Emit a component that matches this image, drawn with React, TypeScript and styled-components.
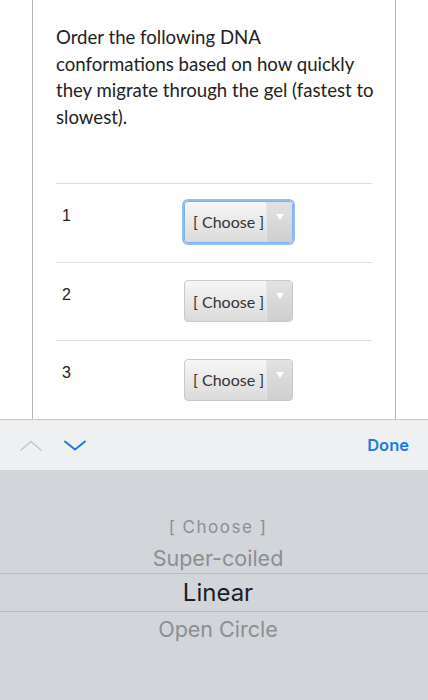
import styled, { createGlobalStyle } from 'styled-components'

const Global = createGlobalStyle`
  html, body { margin: 0; padding: 0; background: #fff; }
  body { font-family: Lato, "Noto Sans", sans-serif; -webkit-font-smoothing: antialiased; }
  #root { height: 700px; }
`

const rows = [1, 2, 3]
const options = ['[ Choose ]', 'Super-coiled', 'Linear', 'Open Circle']

export default function App() {
  return (
    <Page>
      <Global />
      <Viewport>
        <Card>
          <Question>
            Order the following DNA conformations based on how quickly they migrate through the gel (fastest to slowest).
          </Question>
          {rows.map(n => (
            <Row key={n}>
              <Label>{n}</Label>
              <Select $focused={n === 1}>
                <SelectText>[ Choose ]</SelectText>
                <Arrow>
                  <svg width="8" height="6" viewBox="0 0 8 6"><path d="M0 0 H8 L4 6 Z" fill="#fff" /></svg>
                </Arrow>
              </Select>
            </Row>
          ))}
        </Card>
      </Viewport>

      <Toolbar>
        <Nav>
          <svg width="22" height="11" viewBox="0 0 22 11">
            <path d="M1 10 L11 1.5 L21 10" fill="none" stroke="#c3c5c9" strokeWidth="1.6" strokeLinecap="round" strokeLinejoin="round" />
          </svg>
          <svg width="22" height="11" viewBox="0 0 22 11">
            <path d="M1 1.5 L11 9.5 L21 1.5" fill="none" stroke="#1c7be3" strokeWidth="2" strokeLinecap="round" strokeLinejoin="round" />
          </svg>
        </Nav>
        <Done>Done</Done>
      </Toolbar>

      <Picker>
        <Option $size={17} $h={30} $spacing={1.5}>{options[0]}</Option>
        <Option $size={21.5} $h={31}>{options[1]}</Option>
        <Selected>{options[2]}</Selected>
        <Option $size={21.5} $h={34}>{options[3]}</Option>
      </Picker>
    </Page>
  )
}

const Page = styled.div`
  display: grid; grid-template-rows: 419px 51px 1fr; height: 700px; overflow: hidden;
`

const Viewport = styled.div`
  overflow: hidden; padding: 0 32px;
`

const Card = styled.div`
  height: 100%; box-sizing: border-box; border-left: 1px solid #b3b3b3; border-right: 1px solid #b3b3b3;
  padding: 24px 23px 0 23px;
`

const Question = styled.p`
  margin: 0 -6px 53px 0; font-size: 18.6px; line-height: 26.5px; color: #222;
`

const Row = styled.div`
  display: grid; grid-template-columns: 128px 1fr; align-items: center;
  height: 78.5px; box-sizing: border-box; border-top: 1px solid #dedede;
`

const Label = styled.span`
  align-self: start; padding: 23px 0 0 6px; font-family: "Liberation Sans", Arial, sans-serif;
  font-size: 16px; line-height: 18px; color: #222;
`

const Select = styled.div<{ $focused?: boolean }>`
  display: flex; width: 109px; height: 42px; box-sizing: border-box;
  border: 1px solid ${p => (p.$focused ? '#7fb0ec' : '#c9c9c9')}; border-radius: 4px;
  box-shadow: ${p => (p.$focused ? '0 0 0 2px #93bdf0' : 'none')};
  background: linear-gradient(#f7f7f7, #dadada); overflow: hidden;
  margin-top: ${p => (p.$focused ? '-2px' : '0')};
`

const SelectText = styled.span`
  flex: 1; display: flex; align-items: center; padding-left: 8px;
  font-size: 16px; color: #333; white-space: nowrap;
`

const Arrow = styled.span`
  width: 26px; display: flex; align-items: flex-start; justify-content: center; padding-top: 12px; box-sizing: border-box;
  background: linear-gradient(#e2e2e2, #cfcfcf); border-left: 1px solid #e6e6e6;
`

const Toolbar = styled.div`
  display: flex; align-items: center; justify-content: space-between;
  background: #eff0f2; border-top: 1px solid #cacaca; box-sizing: border-box; padding: 0 19px 0 20px;
`

const Nav = styled.div`
  display: flex; gap: 22px; align-items: center;
`

const Done = styled.span`
  font-family: Inter, "Noto Sans", sans-serif; font-weight: 600; font-size: 16.5px; color: #1c7be3;
`

const Picker = styled.div`
  background: #d2d5da; display: flex; flex-direction: column; padding: 42px 0 0 8px;
  font-family: Inter, "Noto Sans", sans-serif;
`

const Option = styled.div<{ $size: number; $h: number; $spacing?: number }>`
  height: ${p => p.$h}px; display: flex; align-items: center; justify-content: center;
  font-size: ${p => p.$size}px; letter-spacing: ${p => p.$spacing ?? 0}px; color: #8d8e92;
`

const Selected = styled.div`
  height: 39px; box-sizing: border-box; border-top: 1px solid #b9bcc1; border-bottom: 1px solid #b9bcc1;
  margin-left: -8px; padding-left: 8px;
  display: flex; align-items: center; justify-content: center; font-size: 24px; color: #1d1d1f;
`
